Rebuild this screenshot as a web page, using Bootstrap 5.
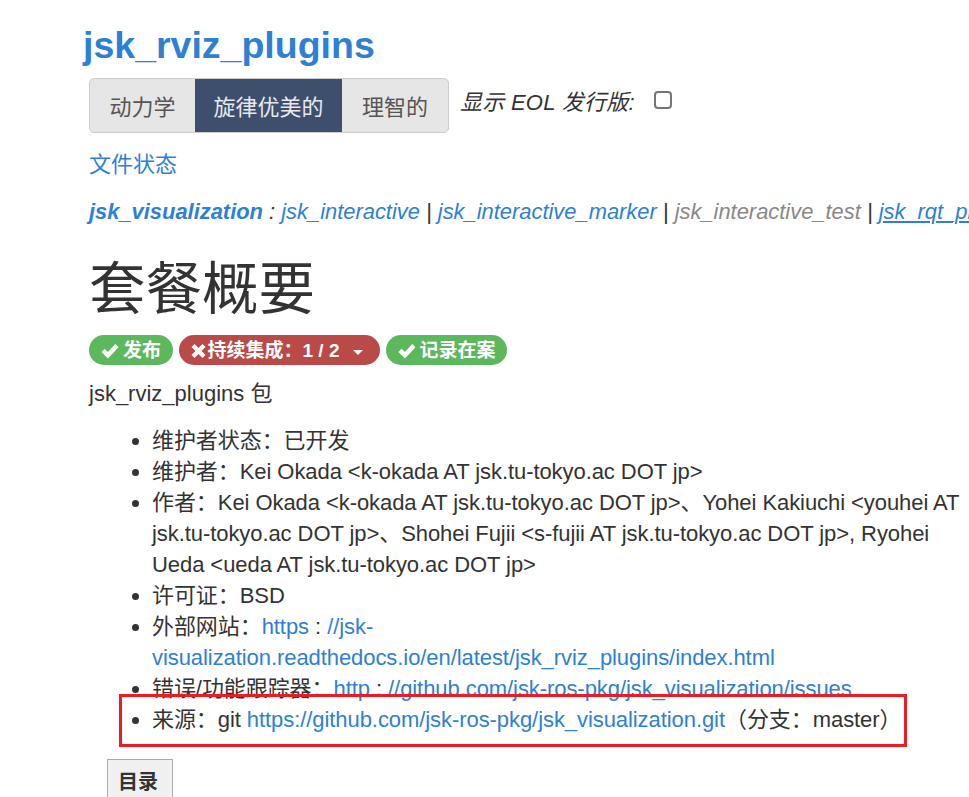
<!DOCTYPE html>
<html lang="zh">
<head>
<meta charset="utf-8">
<link href="https://cdn.jsdelivr.net/npm/bootstrap@5.3.0/dist/css/bootstrap.min.css" rel="stylesheet">
<style>
html,body{height:797px;overflow:hidden}
body{font-family:"Liberation Sans","Noto Sans CJK SC",sans-serif;font-size:22px;line-height:31px;color:#333;background:#fff;position:relative}
a{color:#2e7fd5;text-decoration:none}
.pg-wrap{padding:0 0 0 89px;width:1300px}
.pg-title{font-size:37.5px;line-height:40px;font-weight:700;color:#2e7fd5;margin:25px 0 13px -6px}
.dist-row{height:55px;margin-bottom:16px}
.dist-group{border:1px solid #ccc;border-radius:5px;overflow:hidden;height:55px;background:#e6e6e6}
.dist-group .dist-btn{padding:0 20px 0 19.5px;line-height:57px;height:53px;font-size:22px;color:#555;white-space:nowrap}
.dist-group .dist-btn:first-child{padding-right:19.5px}
.dist-group .dist-on{background:#3e4f6e;color:#e6e9ee;padding:0 18.5px}
.dist-group .dist-on + .dist-btn{padding-left:20px}
.eol-text{font-style:italic;font-size:22px;line-height:50px;margin-left:11px;color:#333;letter-spacing:.25px}
.eol-box{width:18px;height:18px;border:2px solid #767676;border-radius:4px;margin-left:19px;margin-top:13px}
.file-st{font-size:22px;line-height:32px;margin-bottom:15px}
.stack-line{font-style:italic;font-size:21.9px;line-height:31px;white-space:nowrap;margin-bottom:28px}
.stack-line .muted-pk{color:#888}
.stack-line .under{text-decoration:underline}
.big-h{font-size:56.5px;line-height:70px;font-weight:400;margin:0 0 10px;color:#333}
.pill-row{gap:6px;height:30px;margin-bottom:13px}
.pill-it{height:30px;border-radius:15px;color:#fff;font-weight:700;font-size:19px;line-height:32px;padding:0 11.5px 0 11px;white-space:nowrap}
.pill-ok{background:#5cb85c}
.pill-bad{background:#b94a48;padding:0 17px 0 11px}
.pill-it svg{vertical-align:-2px;margin-right:3px}
.pill-bad svg{margin-right:1px}
.caret-d{display:inline-block;border-top:5px solid #fff;border-left:5px solid transparent;border-right:5px solid transparent;margin-left:13px;vertical-align:2px}
.pkg-line{margin:0 0 16px;line-height:31px}
.info-list{padding-left:63px;margin:0 0 24px;width:880px;line-height:31px;letter-spacing:-.07px}
.toc-box{border:1px solid #aaa;background:#f0f0f0;width:66px;height:60px;margin-left:18px;padding:0 10px;font-weight:700;font-size:20px;line-height:44px}
.hl-box{position:absolute;left:119px;top:694px;width:788px;height:53px;border:3px solid #ed1c24}
</style>
</head>
<body>
<div class="pg-wrap">
<h1 class="pg-title">jsk_rviz_plugins</h1>
<div class="dist-row d-flex align-items-start">
<div class="dist-group d-flex">
<div class="dist-btn">动力学</div>
<div class="dist-btn dist-on">旋律优美的</div>
<div class="dist-btn">理智的</div>
</div>
<div class="eol-text">显示 EOL 发行版:</div>
<div class="eol-box"></div>
</div>
<div class="file-st"><a href="#">文件状态</a></div>
<div class="stack-line"><a href="#"><b>jsk_visualization</b></a> : <a href="#">jsk_interactive</a> | <a href="#">jsk_interactive_marker</a> | <span class="muted-pk">jsk_interactive_test</span> | <a href="#" class="under">jsk_rqt_plugins</a></div>
<h2 class="big-h">套餐概要</h2>
<div class="pill-row d-flex">
<div class="pill-it pill-ok"><svg width="20" height="16" viewBox="0 0 18 15"><path d="M1 8.500 4 5.500 7 8.500 14 1 17 4 7 14.500z" fill="#fff"/></svg>发布</div>
<div class="pill-it pill-bad"><svg width="17" height="16" viewBox="0 0 16 16"><path d="M1 4 4 1 8 5 12 1 15 4 11 8 15 12 12 15 8 11 4 15 1 12 5 8z" fill="#fff"/></svg>持续集成&#xFF1A;1 / 2<span class="caret-d"></span></div>
<div class="pill-it pill-ok"><svg width="20" height="16" viewBox="0 0 18 15"><path d="M1 8.500 4 5.500 7 8.500 14 1 17 4 7 14.500z" fill="#fff"/></svg>记录在案</div>
</div>
<p class="pkg-line">jsk_rviz_plugins 包</p>
<ul class="info-list">
<li>维护者状态&#xFF1A;已开发</li>
<li>维护者&#xFF1A;Kei Okada &lt;k-okada AT jsk.tu-tokyo.ac DOT jp&gt;</li>
<li>作者&#xFF1A;Kei Okada &lt;k-okada AT jsk.tu-tokyo.ac DOT jp&gt;、Yohei Kakiuchi &lt;youhei AT jsk.tu-tokyo.ac DOT jp&gt;、Shohei Fujii &lt;s-fujii AT jsk.tu-tokyo.ac DOT jp&gt;, Ryohei Ueda &lt;ueda AT jsk.tu-tokyo.ac DOT jp&gt;</li>
<li>许可证&#xFF1A;BSD</li>
<li>外部网站&#xFF1A;<a href="#">https</a> : <a href="#">//jsk-visualization.readthedocs.io/en/latest/jsk_rviz_plugins/index.html</a></li>
<li>错误/功能跟踪器&#xFF1A;<a href="#">http</a> : <a href="#">//github.com/jsk-ros-pkg/jsk_visualization/issues</a></li>
<li>来源&#xFF1A;git <a href="#">https://github.com/jsk-ros-pkg/jsk_visualization.git</a>&#xFF08;分支&#xFF1A;master&#xFF09;</li>
</ul>
<div class="toc-box">目录</div>
</div>
<div class="hl-box"></div>
<script src="https://cdn.jsdelivr.net/npm/bootstrap@5.3.0/dist/js/bootstrap.bundle.min.js"></script>
</body>
</html>
